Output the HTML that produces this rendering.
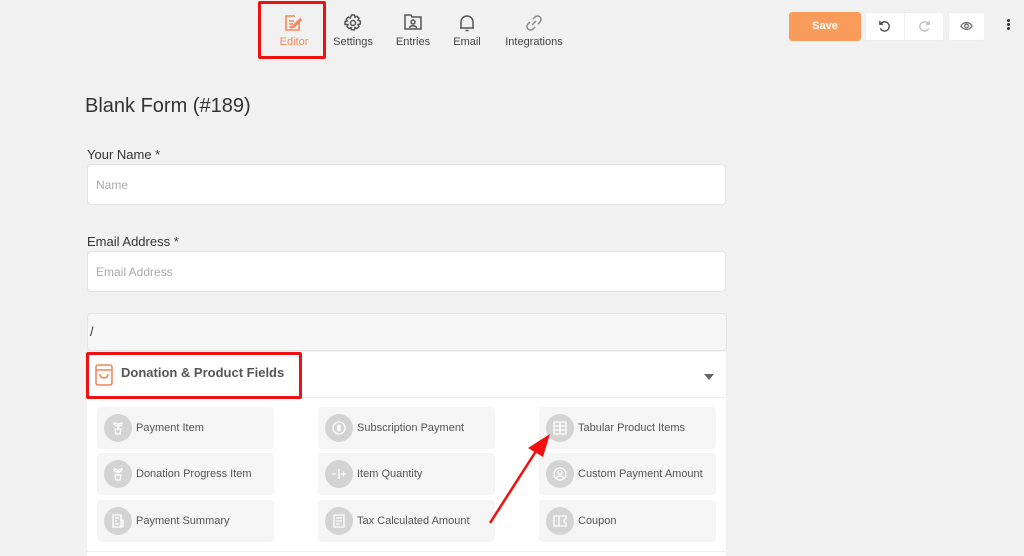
<!DOCTYPE html>
<html><head><meta charset="utf-8"><style>
*{box-sizing:border-box;margin:0;padding:0}
body{width:1024px;height:556px;overflow:hidden;background:#f1f1f1;font-family:"Liberation Sans",sans-serif;position:relative;color:#333}
.a{position:absolute}
.nav{font-size:11px;color:#444;text-align:center}
.inp{position:absolute;left:87px;width:639px;height:41px;background:#fff;border:1px solid #e3e3e3;border-radius:4px;font-size:12px;color:#aaa;padding:13px 8px}
.lbl{position:absolute;left:87px;font-size:13px;color:#333}
.tile{position:absolute;width:177px;height:42px;background:#f5f5f5;border-radius:4px;font-size:11px;color:#555}
.tile .c{position:absolute;left:7px;top:7px;width:28px;height:28px;border-radius:50%;background:#d3d3d3}
.tile .c svg{position:absolute;left:7px;top:7px}
.tile span{position:absolute;left:39px;top:15px}
</style></head><body>
<div class="a" style="left:258px;top:1px;width:68px;height:58px;border:3px solid #ee1111;border-radius:2px"></div>
<svg class="a" style="left:283px;top:13px" width="20" height="20" viewBox="0 0 20 20" fill="none" stroke="#f4875b" stroke-width="1.6"><path d="M16 9v8H3V3h9"/><path d="M6 8h5M6 11h4M6 14h3"/><path d="M10 13l7-7 1 1-7 7-2 .5z"/></svg>
<div class="a nav" style="left:272px;top:36px;width:44px;color:#f4875b">Editor</div>
<svg class="a" style="left:343px;top:13px" width="20" height="20" viewBox="0 0 20 20" fill="none" stroke="#555" stroke-width="1.5"><circle cx="10" cy="10" r="2.5"/><path d="M8.5 2h3l.5 2.3 2-1 2 2-1 2 2.3.7v3l-2.3.5 1 2-2 2-2-1-.5 2.3h-3l-.5-2.3-2 1-2-2 1-2L2 11.5v-3l2.3-.5-1-2 2-2 2 1z"/></svg>
<div class="a nav" style="left:332px;top:36px;width:42px">Settings</div>
<svg class="a" style="left:403px;top:13px" width="20" height="18" viewBox="0 0 20 18" fill="none" stroke="#555" stroke-width="1.5"><path d="M2 2h6l1 2h9v12H2z"/><circle cx="10" cy="9" r="2"/><path d="M6.5 15c0-3 7-3 7 0"/></svg>
<div class="a nav" style="left:393px;top:36px;width:40px">Entries</div>
<svg class="a" style="left:458px;top:13px" width="18" height="20" viewBox="0 0 18 20" fill="none" stroke="#555" stroke-width="1.5"><path d="M3 15V9a6 6 0 0 1 12 0v6zM2 15h14M7.5 17.5h3"/></svg>
<div class="a nav" style="left:447px;top:36px;width:40px">Email</div>
<svg class="a" style="left:524px;top:13px" width="20" height="20" viewBox="0 0 20 20" fill="none" stroke="#888" stroke-width="1.5"><path d="M8 12l4-4"/><path d="M9 6l2-2a3 3 0 0 1 5 5l-2 2M11 14l-2 2a3 3 0 0 1-5-5l2-2"/></svg>
<div class="a nav" style="left:500px;top:36px;width:68px">Integrations</div>
<div class="a" style="left:789px;top:12px;width:72px;height:29px;background:#f99c5b;border-radius:3px;color:#fff;font-size:11px;font-weight:bold;text-align:center;line-height:29px">Save</div>
<div class="a" style="left:865px;top:12px;width:79px;height:29px;background:#fff;border-radius:3px;border:1px solid #eee"></div>
<div class="a" style="left:904px;top:12px;width:1px;height:29px;background:#eee"></div>
<svg class="a" style="left:878px;top:20px" width="13" height="13" viewBox="0 0 14 14" fill="none" stroke="#444" stroke-width="1.4"><path d="M3 4a5 5 0 1 1-.5 5"/><path d="M2 1v3.5h3.5"/></svg>
<svg class="a" style="left:918px;top:20px" width="13" height="13" viewBox="0 0 14 14" fill="none" stroke="#bbb" stroke-width="1.4"><path d="M11 4a5 5 0 1 0 .5 5"/><path d="M12 1v3.5H8.5"/></svg>
<div class="a" style="left:948px;top:12px;width:37px;height:29px;background:#fff;border-radius:3px;border:1px solid #eee"></div>
<svg class="a" style="left:960px;top:21px" width="13" height="10" viewBox="0 0 14 10" fill="none" stroke="#666" stroke-width="1.3"><path d="M1 5c3-5 9-5 12 0-3 5-9 5-12 0z"/><circle cx="7" cy="5" r="2"/></svg>
<div class="a" style="left:1007px;top:19px;width:3px;height:3px;background:#333;border-radius:50%;box-shadow:0 4px #333,0 8px #333"></div>
<div class="a" style="left:85px;top:95px;font-size:20px;color:#333">Blank Form (#189)</div>
<div class="lbl" style="top:147px">Your Name *</div>
<div class="inp" style="top:164px">Name</div>
<div class="lbl" style="top:234px">Email Address *</div>
<div class="inp" style="top:251px">Email Address</div>
<div class="a" style="left:87px;top:313px;width:640px;height:38px;background:#f6f6f6;border:1px solid #e5e5e5;border-radius:4px;font-size:13px;padding:10px 2px;color:#333">/</div>
<div class="a" style="left:87px;top:352px;width:639px;height:204px;background:#fff"></div>
<div class="a" style="left:87px;top:397px;width:639px;height:1px;background:#f0f0f0"></div>
<div class="a" style="left:87px;top:551px;width:639px;height:1px;background:#eee"></div>
<svg class="a" style="left:94px;top:363px" width="20" height="24" viewBox="0 0 20 24" fill="none" stroke="#f4875b" stroke-width="1.6"><rect x="2" y="2" width="16" height="20" rx="2"/><path d="M2 7h16M6 11a4 4 0 0 0 8 0"/></svg>
<div class="a" style="left:121px;top:365px;font-size:13px;font-weight:bold;color:#555">Donation &amp; Product Fields</div>
<div class="a" style="left:704px;top:374px;border-left:5px solid transparent;border-right:5px solid transparent;border-top:6px solid #666"></div>
<div class="a" style="left:86px;top:352px;width:216px;height:47px;border:3px solid #ee1111;border-radius:2px"></div>
<div class="tile" style="left:97px;top:407px"><div class="c"><svg width="14" height="14" viewBox="0 0 14 14" fill="none" stroke="#fff" stroke-width="1.3"><path d="M7 8V5M7 5C7 2 3 2 3 2s0 3 4 3zM7 5c0-3 4-3 4-3s0 3-4 3M4 8h6l-1 5H5z"/></svg></div><span>Payment Item</span></div>
<div class="tile" style="left:97px;top:453px"><div class="c"><svg width="14" height="14" viewBox="0 0 14 14" fill="none" stroke="#fff" stroke-width="1.3"><path d="M7 8V5M7 5C7 2 3 2 3 2s0 3 4 3zM7 5c0-3 4-3 4-3s0 3-4 3M4 8h6l-1 5H5z"/></svg></div><span>Donation Progress Item</span></div>
<div class="tile" style="left:97px;top:500px"><div class="c"><svg width="14" height="14" viewBox="0 0 14 14" fill="none" stroke="#fff" stroke-width="1.3"><path d="M2 1h8v12H2zM10 6h2v7h-2M4 4h4M4 7h2M4 10h4"/></svg></div><span>Payment Summary</span></div>
<div class="tile" style="left:318px;top:407px"><div class="c"><svg width="14" height="14" viewBox="0 0 14 14" fill="none" stroke="#fff" stroke-width="1.3"><circle cx="7" cy="7" r="6"/><path d="M9 5H6v2h2v2H5M7 3.5v7"/></svg></div><span>Subscription Payment</span></div>
<div class="tile" style="left:318px;top:453px"><div class="c"><svg width="14" height="14" viewBox="0 0 14 14" fill="none" stroke="#fff" stroke-width="1.3"><path d="M0 7h4M7 2v10M9 7h5M11.5 4.5v5"/></svg></div><span>Item Quantity</span></div>
<div class="tile" style="left:318px;top:500px"><div class="c"><svg width="14" height="14" viewBox="0 0 14 14" fill="none" stroke="#fff" stroke-width="1.3"><path d="M2 1h10v12H2zM4 4h6M4 7h6M4 10h4"/></svg></div><span>Tax Calculated Amount</span></div>
<div class="tile" style="left:539px;top:407px"><div class="c"><svg width="14" height="14" viewBox="0 0 14 14" fill="none" stroke="#fff" stroke-width="1.3"><path d="M1 1h12v12H1zM1 5h12M1 9h12M7 1v12"/></svg></div><span>Tabular Product Items</span></div>
<div class="tile" style="left:539px;top:453px"><div class="c"><svg width="14" height="14" viewBox="0 0 14 14" fill="none" stroke="#fff" stroke-width="1.3"><circle cx="7" cy="7" r="6"/><circle cx="7" cy="5.5" r="2"/><path d="M3.5 11c1-2.5 6-2.5 7 0"/></svg></div><span>Custom Payment Amount</span></div>
<div class="tile" style="left:539px;top:500px"><div class="c"><svg width="14" height="14" viewBox="0 0 14 14" fill="none" stroke="#fff" stroke-width="1.3"><path d="M1 2h12v3a2 2 0 0 0 0 4v3H1zM6 2v10"/></svg></div><span>Coupon</span></div>
<svg class="a" style="left:0;top:0" width="1024" height="556"><path d="M490 523L538 448" stroke="#f01010" stroke-width="2.5"/><path d="M550 434L528 448 543 457z" fill="#f01010"/></svg>
</body></html>
